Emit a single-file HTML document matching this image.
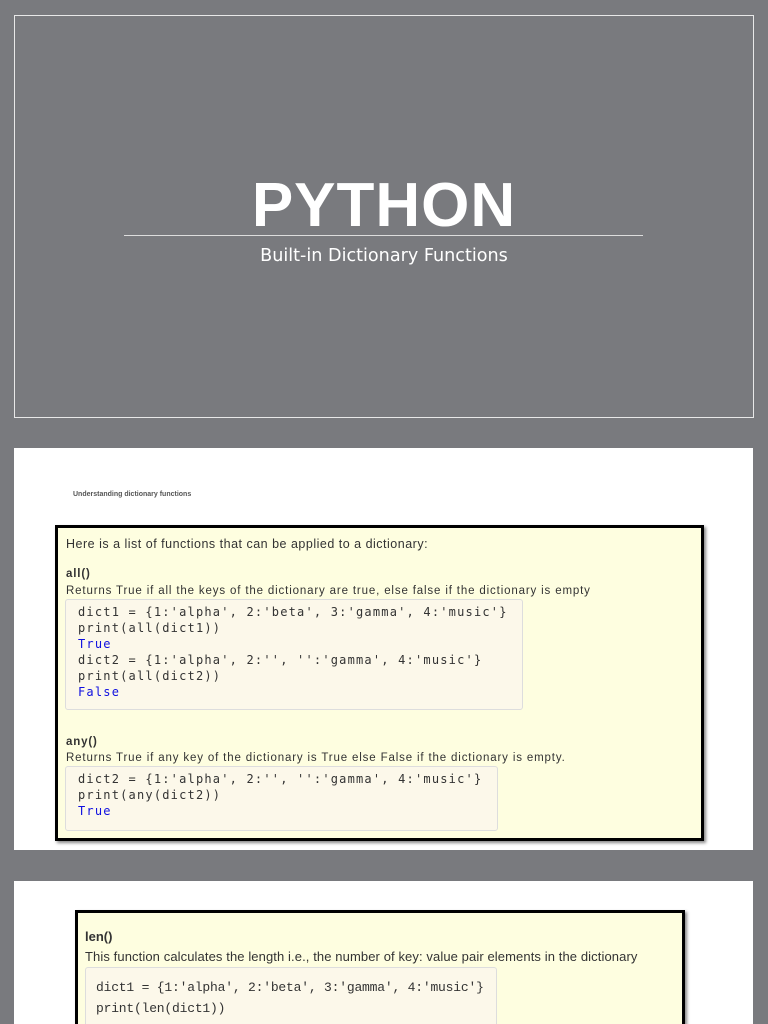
<!DOCTYPE html>
<html><head><meta charset="utf-8"><style>
html,body{margin:0;width:768px;height:1024px;overflow:hidden}
body{background:#797a7e;position:relative;font-family:"Liberation Sans",sans-serif}
.slide1{position:absolute;left:14px;top:15px;width:738px;height:401px;border:1px solid #e8e8e8}
.t{position:absolute;left:0;width:100%;text-align:center;color:#fff}
.card{position:absolute;left:14px;width:739px;background:#fff}
.yb{position:absolute;background:#fefee0;border:3px solid #000;box-shadow:2px 2px 3px #888;box-sizing:border-box;color:#333}
.code{position:absolute;background:#fcf8ea;border:1px solid #ddd;border-radius:3px;font-family:"DejaVu Sans Mono",monospace;font-size:12px;line-height:16px;color:#333;padding:4px 12px;box-sizing:border-box;letter-spacing:1.2px;white-space:nowrap}
.b{color:#1010e0}
.p{position:absolute;font-size:11.5px;white-space:nowrap;letter-spacing:0.85px}
</style></head><body>
<div class="slide1">
<div class="t" style="top:154px;font-size:62px;font-weight:bold;letter-spacing:1px">PYTHON</div>
<div style="position:absolute;left:109px;top:219px;width:519px;height:1px;background:#ddd"></div>
<div class="t" style="top:230px;font-size:17.6px;font-family:'DejaVu Sans',sans-serif">Built-in Dictionary Functions</div>
</div>
<div class="card" style="top:448px;height:402px">
<div style="position:absolute;left:59px;top:43px;font-size:7px;color:#555;font-weight:bold">Understanding dictionary functions</div>
</div>
<div class="yb" style="left:55px;top:525px;width:649px;height:316px">
<div class="p" style="left:8px;top:9px;font-size:12.5px;letter-spacing:0.5px">Here is a list of functions that can be applied to a dictionary:</div>
<div class="p" style="left:8px;top:40px;font-weight:bold">all()</div>
<div class="p" style="left:8px;top:57px">Returns True if all the keys of the dictionary are true, else false if the dictionary is empty</div>
<div class="code" style="left:7px;top:71px;width:458px;height:111px">dict1 = {1:'alpha', 2:'beta', 3:'gamma', 4:'music'}<br>print(all(dict1))<br><span class="b">True</span><br>dict2 = {1:'alpha', 2:'', '':'gamma', 4:'music'}<br>print(all(dict2))<br><span class="b">False</span></div>
<div class="p" style="left:8px;top:208px;font-weight:bold">any()</div>
<div class="p" style="left:8px;top:224px">Returns True if any key of the dictionary is True else False if the dictionary is empty.</div>
<div class="code" style="left:7px;top:238px;width:433px;height:65px">dict2 = {1:'alpha', 2:'', '':'gamma', 4:'music'}<br>print(any(dict2))<br><span class="b">True</span></div>
</div>
<div class="card" style="top:881px;height:143px"></div>
<div class="yb" style="left:75px;top:910px;width:610px;height:130px">
<div class="p" style="left:7px;top:16px;font-weight:bold;font-size:13px;letter-spacing:0">len()</div>
<div class="p" style="left:7px;top:36px;font-size:13px;letter-spacing:0.1px">This function calculates the length i.e., the number of key: value pair elements in the dictionary</div>
<div class="code" style="left:7px;top:54px;width:412px;height:80px;font-size:13px;line-height:21px;padding:9px 10px;font-family:'Liberation Mono',monospace;letter-spacing:-0.2px">dict1 =  {1:'alpha', 2:'beta', 3:'gamma', 4:'music'}<br>print(len(dict1))<br><span class="b">4</span></div>
</div>
</body></html>
